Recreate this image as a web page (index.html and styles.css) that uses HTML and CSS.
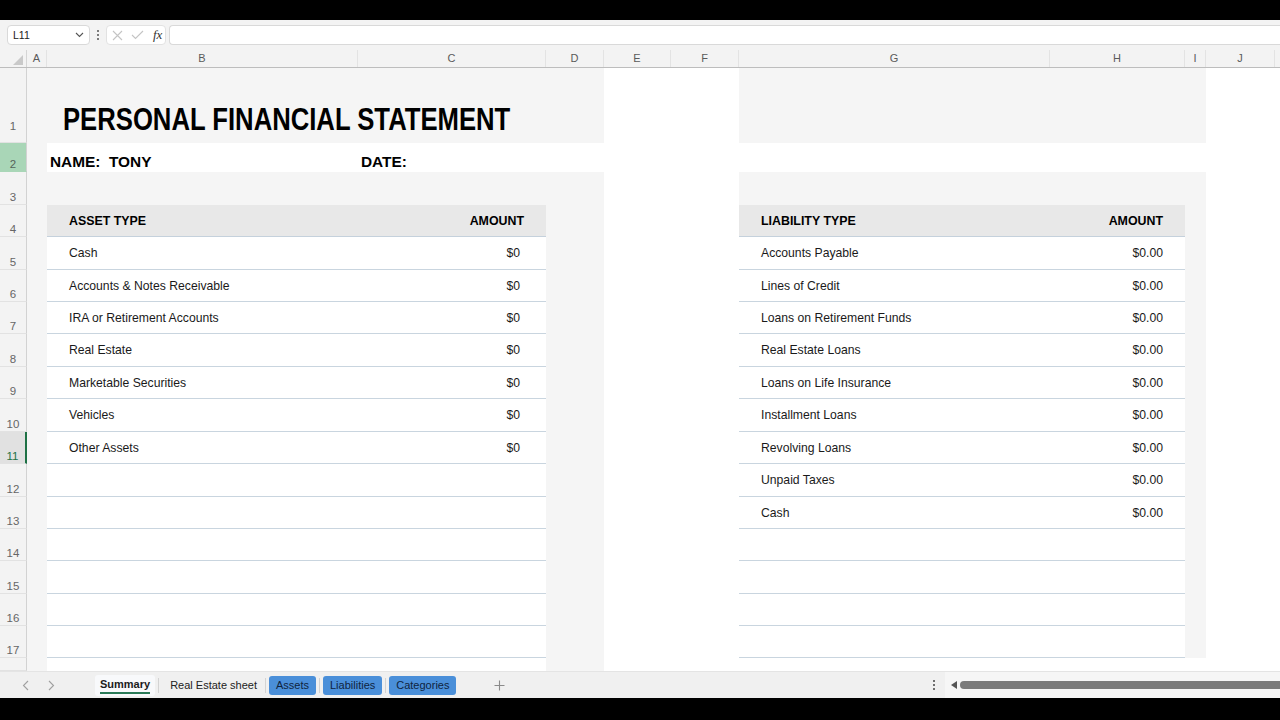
FILE: index.html
```html
<!DOCTYPE html>
<html>
<head>
<meta charset="utf-8">
<title>Personal Financial Statement</title>
<link rel="stylesheet" href="styles.css">
</head>
<body>
<div class="blackbar top"></div>
<div class="app">
  <div class="fbar">
    <div class="namebox"><span>L11</span>
      <svg class="chev" width="9" height="6" viewBox="0 0 9 6"><path d="M1 1 L4.5 4.5 L8 1" fill="none" stroke="#555" stroke-width="1.1"/></svg>
    </div>
    <div class="vdots"><i></i><i></i><i></i></div>
    <div class="fxbox">
      <svg width="11" height="11" viewBox="0 0 11 11"><path d="M1 1 L10 10 M10 1 L1 10" stroke="#c4c4c4" stroke-width="1.1"/></svg>
      <svg width="13" height="10" viewBox="0 0 13 10"><path d="M1 5 L4.5 8.5 L12 1" fill="none" stroke="#c4c4c4" stroke-width="1.1"/></svg>
      <span class="fx">fx</span>
    </div>
    <div class="finput"></div>
  </div>

  <div class="sheet">
    <div class="row hdr">
      <div class="corner"><svg width="10" height="10" viewBox="0 0 10 10"><path d="M10 0 L10 10 L0 10 Z" fill="#c9c9c9"/></svg></div>
      <div class="ch">A</div><div class="ch">B</div><div class="ch">C</div><div class="ch">D</div><div class="ch">E</div><div class="ch">F</div><div class="ch">G</div><div class="ch">H</div><div class="ch">I</div><div class="ch">J</div><div class="ch last"></div>
    </div>

    <div class="row h75">
      <div class="rh rh-tall">1</div>
      <div class="ca gray"></div>
      <div class="cbd gray title"><span>PERSONAL FINANCIAL STATEMENT</span></div>
      <div class="cgi gray"></div>
    </div>

    <div class="row h29">
      <div class="rh rh-hl">2</div>
      <div class="ca gray"></div>
      <div class="cb info">NAME:  TONY</div>
      <div class="ccd info">DATE:</div>
    </div>

    <div class="row h33">
      <div class="rh">3</div>
      <div class="ca gray"></div>
      <div class="cbd gray"></div>
      <div class="cgi gray"></div>
    </div>

    <div class="row h32">
      <div class="rh">4</div>
      <div class="ca gray"></div>
      <div class="cbc thead"><span>ASSET TYPE</span><span>AMOUNT</span></div>
      <div class="cd gray"></div>
      <div class="cgh thead"><span>LIABILITY TYPE</span><span>AMOUNT</span></div>
      <div class="ci gray"></div>
    </div>

    <div class="row h33">
      <div class="rh">5</div>
      <div class="ca gray"></div>
      <div class="cbc tr left"><span>Cash</span><span>$0</span></div>
      <div class="cd gray"></div>
      <div class="cgh tr"><span>Accounts Payable</span><span>$0.00</span></div>
      <div class="ci gray"></div>
    </div>

    <div class="row h32">
      <div class="rh">6</div>
      <div class="ca gray"></div>
      <div class="cbc tr left"><span>Accounts &amp; Notes Receivable</span><span>$0</span></div>
      <div class="cd gray"></div>
      <div class="cgh tr"><span>Lines of Credit</span><span>$0.00</span></div>
      <div class="ci gray"></div>
    </div>

    <div class="row h32">
      <div class="rh">7</div>
      <div class="ca gray"></div>
      <div class="cbc tr left"><span>IRA or Retirement Accounts</span><span>$0</span></div>
      <div class="cd gray"></div>
      <div class="cgh tr"><span>Loans on Retirement Funds</span><span>$0.00</span></div>
      <div class="ci gray"></div>
    </div>

    <div class="row h33">
      <div class="rh">8</div>
      <div class="ca gray"></div>
      <div class="cbc tr left"><span>Real Estate</span><span>$0</span></div>
      <div class="cd gray"></div>
      <div class="cgh tr"><span>Real Estate Loans</span><span>$0.00</span></div>
      <div class="ci gray"></div>
    </div>

    <div class="row h32">
      <div class="rh">9</div>
      <div class="ca gray"></div>
      <div class="cbc tr left"><span>Marketable Securities</span><span>$0</span></div>
      <div class="cd gray"></div>
      <div class="cgh tr"><span>Loans on Life Insurance</span><span>$0.00</span></div>
      <div class="ci gray"></div>
    </div>

    <div class="row h33">
      <div class="rh">10</div>
      <div class="ca gray"></div>
      <div class="cbc tr left"><span>Vehicles</span><span>$0</span></div>
      <div class="cd gray"></div>
      <div class="cgh tr"><span>Installment Loans</span><span>$0.00</span></div>
      <div class="ci gray"></div>
    </div>

    <div class="row h32">
      <div class="rh rh-sel">11</div>
      <div class="ca gray"></div>
      <div class="cbc tr left"><span>Other Assets</span><span>$0</span></div>
      <div class="cd gray"></div>
      <div class="cgh tr"><span>Revolving Loans</span><span>$0.00</span></div>
      <div class="ci gray"></div>
    </div>

    <div class="row h33">
      <div class="rh">12</div>
      <div class="ca gray"></div>
      <div class="cbc tr left"></div>
      <div class="cd gray"></div>
      <div class="cgh tr"><span>Unpaid Taxes</span><span>$0.00</span></div>
      <div class="ci gray"></div>
    </div>

    <div class="row h32">
      <div class="rh">13</div>
      <div class="ca gray"></div>
      <div class="cbc tr left"></div>
      <div class="cd gray"></div>
      <div class="cgh tr"><span>Cash</span><span>$0.00</span></div>
      <div class="ci gray"></div>
    </div>

    <div class="row h32">
      <div class="rh">14</div>
      <div class="ca gray"></div>
      <div class="cbc tr left"></div>
      <div class="cd gray"></div>
      <div class="cgh tr"></div>
      <div class="ci gray"></div>
    </div>

    <div class="row h33">
      <div class="rh">15</div>
      <div class="ca gray"></div>
      <div class="cbc tr left"></div>
      <div class="cd gray"></div>
      <div class="cgh tr"></div>
      <div class="ci gray"></div>
    </div>

    <div class="row h32">
      <div class="rh">16</div>
      <div class="ca gray"></div>
      <div class="cbc tr left"></div>
      <div class="cd gray"></div>
      <div class="cgh tr"></div>
      <div class="ci gray"></div>
    </div>

    <div class="row h32">
      <div class="rh">17</div>
      <div class="ca gray"></div>
      <div class="cbc tr left"></div>
      <div class="cd gray"></div>
      <div class="cgh tr"></div>
      <div class="ci gray"></div>
    </div>

    <div class="row h13">
      <div class="rh"></div>
      <div class="ca gray"></div>
      <div class="cbc white"></div>
      <div class="cd gray"></div>
    </div>
  </div>

  <div class="tabbar">
    <div class="navs">
      <svg width="7" height="11" viewBox="0 0 7 11"><path d="M6 1 L1.5 5.5 L6 10" fill="none" stroke="#a0a0a0" stroke-width="1.1"/></svg>
      <svg width="7" height="11" viewBox="0 0 7 11"><path d="M1 1 L5.5 5.5 L1 10" fill="none" stroke="#a0a0a0" stroke-width="1.1"/></svg>
    </div>
    <div class="tab active"><span>Summary</span></div>
    <div class="sep"></div>
    <div class="tab plain">Real Estate sheet</div>
    <div class="sep"></div>
    <div class="tab blue">Assets</div>
    <div class="sep"></div>
    <div class="tab blue">Liabilities</div>
    <div class="sep"></div>
    <div class="tab blue">Categories</div>
    <div class="plus">
      <svg width="11" height="11" viewBox="0 0 11 11"><path d="M5.5 0.5 V10.5 M0.5 5.5 H10.5" stroke="#8a8a8a" stroke-width="1.1"/></svg>
    </div>
    <div class="hscroll">
      <div class="vdots small"><i></i><i></i><i></i></div>
      <div class="track">
        <svg width="7" height="8" viewBox="0 0 7 8"><path d="M6 0 L6 8 L0 4 Z" fill="#555"/></svg>
        <div class="thumb"></div>
      </div>
    </div>
  </div>
</div>
<div class="blackbar bottom"></div>
</body>
</html>
```

FILE: styles.css
```css
* { box-sizing: border-box; margin: 0; padding: 0; }
html, body { width: 1280px; height: 720px; overflow: hidden; background: #000; }
body { font-family: "Liberation Sans", Arial, sans-serif; color: #1f1f1f; }

.blackbar.top { height: 20px; }
.blackbar.bottom { height: 22px; }

.app { height: 678px; display: flex; flex-direction: column; background: #f3f3f3; }

/* formula bar */
.fbar { height: 30px; flex: none; display: flex; align-items: center; padding-left: 7px; background: #f3f3f3; }
.namebox { width: 83px; height: 20px; background: #fff; border: 1px solid #d9d9d9; border-radius: 4px; display: flex; align-items: center; justify-content: space-between; padding: 0 5px 0 5px; font-size: 10.5px; color: #222; }
.vdots { width: 16px; height: 20px; display: flex; flex-direction: column; align-items: center; justify-content: center; gap: 2px; }
.vdots i { display: block; width: 2px; height: 2px; background: #555; border-radius: 1px; }
.fxbox { width: 60px; height: 20px; background: #fff; border: 1px solid #e2e2e2; border-radius: 4px; display: flex; align-items: center; padding-left: 5px; gap: 8px; }
.fx { font-family: "Liberation Serif", "Times New Roman", serif; font-style: italic; font-size: 13px; color: #333; margin-left: 1px; }
.finput { flex: 1; height: 20px; margin-left: 3px; background: #fff; border: 1px solid #d9d9d9; border-right: none; border-radius: 4px 0 0 4px; }

/* sheet grid */
.sheet { flex: none; height: 621px; background: #fff; overflow: hidden; }
.row { display: grid; grid-template-columns: 27px 20px 311px 188px 58px 67px 68px 311px 135px 21px 69px 1fr; }
.h75 { height: 75px; } .h29 { height: 29px; } .h33 { height: 33px; } .h32 { height: 32px; } .h13 { height: 13px; }

.hdr { height: 18px; background: #f3f3f3; border-bottom: 1px solid #bdbdbd; }
.corner { display: flex; align-items: flex-end; justify-content: flex-end; padding: 0 3px 2px 0; border-right: 1px solid #d5d5d5; }
.ch { font-size: 11px; color: #5a5a5a; text-align: center; line-height: 17px; border-right: 1px solid #e3e3e3; }
.ch.last { border-right: none; }

.rh { grid-column: 1 / 2; background: #f3f3f3; border-right: 1px solid #d2d2d2; border-bottom: 1px solid #e2e2e2; font-size: 11.5px; color: #666; display: flex; align-items: flex-end; justify-content: center; padding-bottom: 1px; }
.rh-tall { padding-bottom: 10px; }
.rh-hl { background: #a9d6b7; color: #55645a; border-bottom-color: #a9d6b7; }
.rh-sel { background: #e1e1e1; color: #1e7145; border-right: 2px solid #1e7145; }

.ca { grid-column: 2 / 3; }
.cb { grid-column: 3 / 4; }
.ccd { grid-column: 4 / 6; }
.cbd { grid-column: 3 / 6; }
.cbc { grid-column: 3 / 5; }
.cd { grid-column: 5 / 6; }
.cgi { grid-column: 8 / 11; }
.cgh { grid-column: 8 / 10; }
.ci { grid-column: 10 / 11; }

.gray { background: #f5f5f5; }
.white { background: #fff; }

.title { display: flex; align-items: flex-end; padding: 0 0 5px 16px; }
.title span { display: inline-block; white-space: nowrap; transform: scaleX(0.828); transform-origin: left center; font-weight: 700; font-size: 31px; line-height: 36px; color: #000; }

.info { white-space: pre; font-weight: 700; font-size: 15.4px; line-height: 18px; color: #000; display: flex; align-items: flex-end; padding: 0 0 1px 3px; }

.thead { background: #e8e8e8; border-bottom: 1px solid #c5d1dc; display: flex; align-items: center; justify-content: space-between; padding: 0 22px; font-weight: 700; font-size: 12.4px; color: #000; }
.tr { background: #fff; border-bottom: 1px solid #c9d5df; display: flex; align-items: center; justify-content: space-between; padding: 0 22px; font-size: 12.2px; color: #1a1a1a; }
.tr.left { padding-right: 26px; }

/* tab bar */
.tabbar { flex: none; height: 27px; display: flex; align-items: center; background: #f0f0f0; border-top: 1px solid #e4e4e4; font-size: 11px; }
.navs { width: 95px; display: flex; align-items: center; padding-left: 22px; gap: 19px; }
.tab { height: 21px; display: flex; align-items: center; color: #222; white-space: nowrap; }
.tab.active { padding: 0 5px; background: #f8f9fb; border-radius: 3px; font-weight: 700; color: #1b1b1b; }
.tab.active span { border-bottom: 2px solid #2a7a57; line-height: 14px; padding-bottom: 1px; }
.tab.plain { padding: 0 5px 0 8px; }
.tab.blue { height: 19px; padding: 0 7px; background: #4a8fd9; border-radius: 3px; color: #0f2440; }
.sep { width: 1px; height: 15px; background: #d3d3d3; margin: 0 3px; }
.plus { margin-left: 38px; display: flex; align-items: center; }
.hscroll { margin-left: auto; width: 351px; height: 100%; display: flex; align-items: center; }
.vdots.small { width: 10px; }
.vdots.small i { background: #444; }
.track { flex: 1; height: 100%; margin-left: 6px; display: flex; align-items: center; padding-left: 6px; background: #f6f6f6; gap: 2px; }
.thumb { flex: 1; height: 8px; background: #7b7b7b; border-radius: 4px 0 0 4px; }
```
